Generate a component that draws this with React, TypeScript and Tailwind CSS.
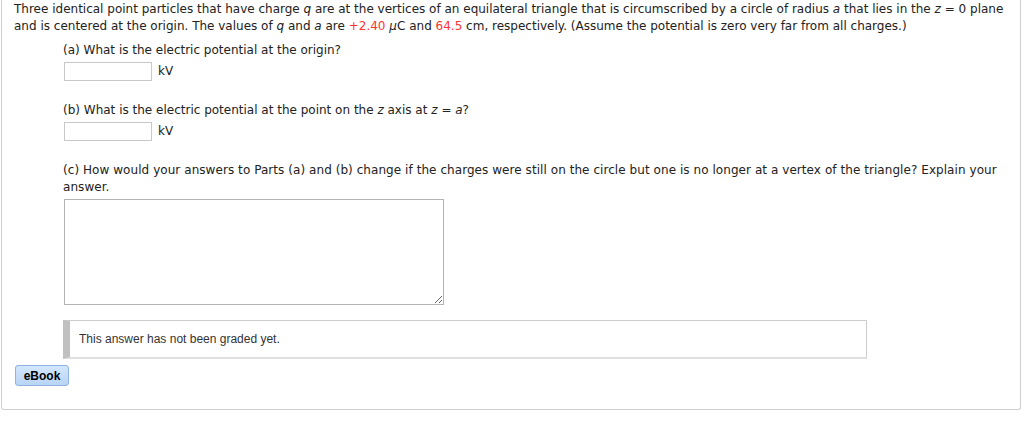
export default function App() {
  const body = 'font-["DejaVu_Sans",Verdana,sans-serif] text-[12px] leading-[17px] text-[#222]';
  const red = 'text-[#f33]';

  return (
    <div className="min-h-[421px] w-[1024px] bg-white">
      <div className="ml-px w-[1020px] rounded-b-[3px] border-x border-b border-[#cfcfcf] pb-[23px] pl-[12px] pr-[6px]">
        <p className={`${body} pt-px`}>
          Three identical point particles that have charge <i>q</i> are at the vertices of an equilateral triangle that is circumscribed by a circle of radius <i>a</i> that lies in the <i>z</i> = 0 plane
          <br />
          and is centered at the origin. The values of <i>q</i> and <i>a</i> are <span className={red}>+2.40</span> <i>μ</i>C and <span className={red}>64.5</span> cm, respectively. (Assume the potential is zero very far from all charges.)
        </p>

        <div className="ml-[49px]">
          <p className={`${body} mt-[7px]`}>(a) What is the electric potential at the origin?</p>
          <div className="mt-[3px] flex items-center">
            <input className="ml-px h-[19px] w-[88px] border border-[#c8c8c8] bg-white outline-none" />
            <span className={`${body} ml-[6px]`}>kV</span>
          </div>

          <p className={`${body} mt-[21px]`}>
            (b) What is the electric potential at the point on the <i>z</i> axis at <i>z</i> = <i>a</i>?
          </p>
          <div className="mt-[3px] flex items-center">
            <input className="ml-px h-[19px] w-[88px] border border-[#c8c8c8] bg-white outline-none" />
            <span className={`${body} ml-[6px]`}>kV</span>
          </div>

          <p className={`${body} mt-[21px] whitespace-nowrap tracking-[0.06px]`}>
            (c) How would your answers to Parts (a) and (b) change if the charges were still on the circle but one is no longer at a vertex of the triangle? Explain your
            <br />
            answer.
          </p>
          <textarea className="mt-[3px] ml-px block h-[106px] w-[380px] border border-[#b4b4b4] bg-white outline-none" />

          <div className="mt-[15px] flex h-[39px] w-[804px] items-center border border-b-2 border-[#cdcdcd] border-b-[#e0e0e0] border-l-[7px] border-l-[#c0c0c0] pl-[9px]">
            <span className='font-["Liberation_Sans",Arial,sans-serif] text-[12px] text-[#333]'>This answer has not been graded yet.</span>
          </div>
        </div>

        <button className='mt-[6px] ml-px flex h-[21px] w-[54px] items-center justify-center rounded-[3px] border border-[#8db2e3] bg-gradient-to-b from-[#d3e6fc] to-[#b9d4f5] font-["Liberation_Sans",Arial,sans-serif] text-[12px] font-bold text-black'>
          eBook
        </button>
      </div>
    </div>
  );
}
